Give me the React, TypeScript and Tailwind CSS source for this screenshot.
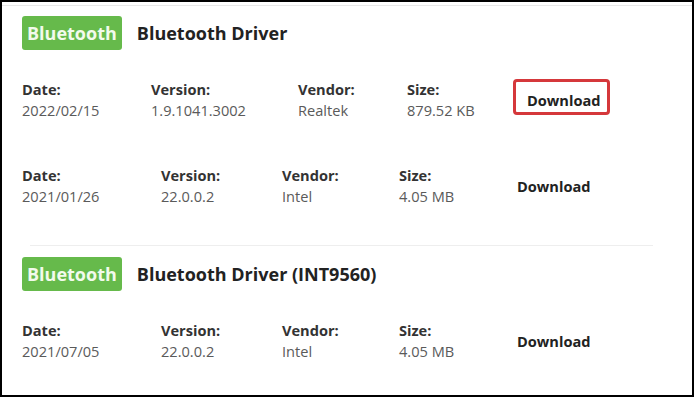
import React from 'react';

type Driver = {
  date: string;
  version: string;
  vendor: string;
  size: string;
};

const font = { fontFamily: '"Open Sans", "Liberation Sans", sans-serif' };

function Field({ label, value, width }: { label: string; value: string; width: string }) {
  return (
    <div className={`${width} shrink-0 text-[14.6px] leading-[21px]`}>
      <div className="font-bold text-[#333333]">{label}</div>
      <div className="text-[#5a5a5a]">{value}</div>
    </div>
  );
}

function DownloadCell({ highlight }: { highlight?: boolean }) {
  return (
    <div className="flex items-center">
      <span className="relative text-[14.6px] leading-[21px] font-bold text-[#222222]">
        {highlight && (
          <span className="absolute -left-[14px] -right-[10px] -top-[11px] -bottom-[4px] border-[3px] border-[#d5383b] rounded-[4px]" />
        )}
        Download
      </span>
    </div>
  );
}

function DriverRow({ d, widths, highlight }: { d: Driver; widths: string[]; highlight?: boolean }) {
  return (
    <div className="flex">
      <Field label="Date:" value={d.date} width={widths[0]} />
      <Field label="Version:" value={d.version} width={widths[1]} />
      <Field label="Vendor:" value={d.vendor} width={widths[2]} />
      <Field label="Size:" value={d.size} width={widths[3]} />
      <DownloadCell highlight={highlight} />
    </div>
  );
}

function Header({ title }: { title: string }) {
  return (
    <div className="flex items-center h-[34px]">
      <span className="flex items-center h-[34px] px-[5px] rounded-[3px] bg-[#66ba4b] text-[#f2faec] text-[18px] font-bold leading-none">
        Bluetooth
      </span>
      <span className="ml-[15px] text-[18px] font-bold text-[#222222] leading-none">{title}</span>
    </div>
  );
}

const wideCols = ['w-[129px]', 'w-[147px]', 'w-[109px]', 'w-[120px]'];
const narrowCols = ['w-[139px]', 'w-[121px]', 'w-[117px]', 'w-[118px]'];

export default function App() {
  return (
    <div className="w-[695px] h-[398px] bg-white pr-[1px] pb-[1px]" style={font}>
      <div className="w-full h-full border-2 border-black bg-white overflow-hidden">
        <div className="mt-[3px] border-t border-[#e8e8e8] pl-[20px] pt-[10px]">
          <Header title="Bluetooth Driver" />
          <div className="mt-[29px]">
            <DriverRow
              d={{ date: '2022/02/15', version: '1.9.1041.3002', vendor: 'Realtek', size: '879.52 KB' }}
              widths={wideCols}
              highlight
            />
          </div>
          <div className="mt-[44px]">
            <DriverRow
              d={{ date: '2021/01/26', version: '22.0.0.2', vendor: 'Intel', size: '4.05 MB' }}
              widths={narrowCols}
            />
          </div>
          <div className="mt-[38px] ml-[8px] w-[623px] h-px bg-[#eeeeee]" />
          <div className="mt-[11px]">
            <Header title="Bluetooth Driver (INT9560)" />
          </div>
          <div className="mt-[29px]">
            <DriverRow
              d={{ date: '2021/07/05', version: '22.0.0.2', vendor: 'Intel', size: '4.05 MB' }}
              widths={narrowCols}
            />
          </div>
        </div>
      </div>
    </div>
  );
}
